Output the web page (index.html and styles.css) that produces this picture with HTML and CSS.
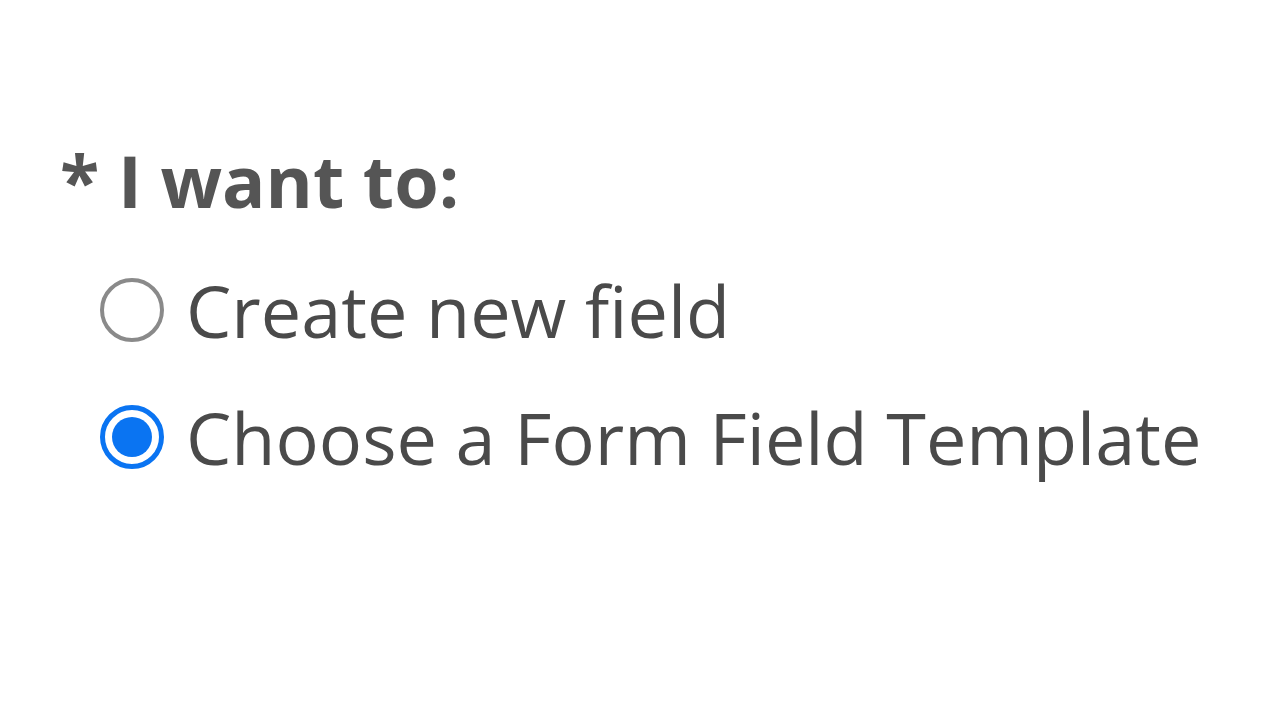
FILE: index.html
```html
<!DOCTYPE html>
<html>
<head>
<meta charset="utf-8">
<link rel="stylesheet" href="styles.css">
</head>
<body>
<div class="form">
  <div class="label">* I want to:</div>
  <div class="options">
    <label class="option">
      <span class="radio"></span>
      <span class="text">Create new field</span>
    </label>
    <label class="option">
      <span class="radio checked"></span>
      <span class="text">Choose a Form Field Template</span>
    </label>
  </div>
</div>
</body>
</html>
```

FILE: styles.css
```css
html, body {
  margin: 0;
  padding: 0;
  background: #ffffff;
}
body {
  width: 1280px;
  height: 720px;
  overflow: hidden;
  font-family: "Open Sans", "DejaVu Sans", sans-serif;
}
.form {
  padding: 130px 0 0 60px;
}
.label {
  font-weight: 700;
  font-size: 72px;
  line-height: 100px;
  color: #555555;
}
.options {
  display: flex;
  flex-direction: column;
  gap: 27px;
  padding-left: 40px;
  margin-top: 30px;
}
.option {
  display: flex;
  align-items: center;
  gap: 22px;
  height: 100px;
}
.radio {
  width: 64px;
  height: 64px;
  box-sizing: border-box;
  border-radius: 50%;
  border: 4px solid #8a8a8a;
  flex: none;
  display: flex;
  align-items: center;
  justify-content: center;
}
.radio.checked {
  border: 5px solid #0a74f2;
}
.radio.checked::after {
  content: "";
  width: 40px;
  height: 40px;
  border-radius: 50%;
  background: #0a74f2;
}
.text {
  font-size: 72px;
  line-height: 100px;
  color: #4a4a4a;
}
```
